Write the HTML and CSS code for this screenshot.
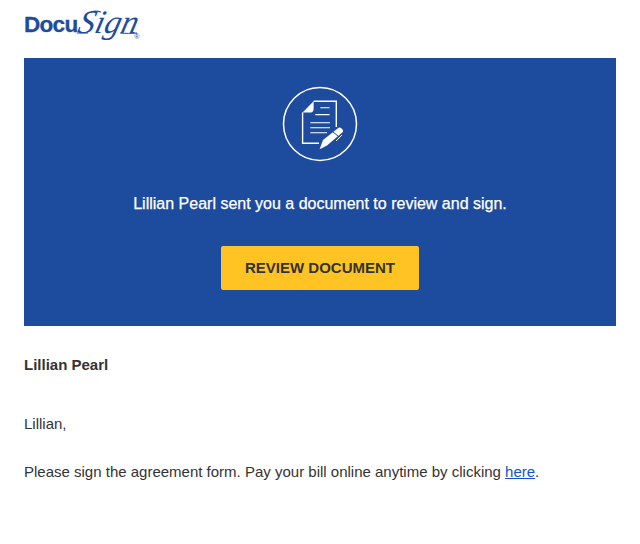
FILE: index.html
```html
<!DOCTYPE html>
<html lang="en">
<head>
<meta charset="utf-8">
<title>DocuSign</title>
<link rel="stylesheet" href="styles.css">
</head>
<body>
<div class="page">
  <header class="logo">
    <span class="logo-docu">Docu</span><span class="logo-sign">Sign</span><span class="logo-reg">®</span>
    <svg class="logo-swoosh" width="120" height="45" viewBox="0 0 120 45" aria-hidden="true">
      <path d="M53 33H64M96 33C101 33.500 108 33.500 113 33" fill="none" stroke="#1d4c9f" stroke-width="1"/>
      <path d="M64 13C68 11 73 10.500 77 12" fill="none" stroke="#1d4c9f" stroke-width="1.200"/>
    </svg>
  </header>
  <section class="banner">
    <svg class="doc-icon" width="76" height="76" viewBox="0 0 76 76" aria-hidden="true">
      <circle cx="38" cy="38" r="36.500" fill="none" stroke="#fff" stroke-width="1.500"/>
      <path d="M31.600 15.300H54.300V41M37 57.300H20.600V26.600" fill="none" stroke="#fff" stroke-width="1.400"/>
      <path d="M20.600 26.600L31.600 15.300V23C31.600 25.500 30 26.600 28 26.600Z" fill="#fff"/>
      <path d="M38.300 21.700H47.600M33.300 28.600H47.600M28.300 36.700H48M28.300 41.700H48M28.300 46.700H45" fill="none" stroke="#fff" stroke-width="1.100"/>
      <path d="M37.600 63.300L41 54L56.600 41.700C58 40.800 59.800 42 60.500 43.500C61.300 44.800 61.300 45.600 60.500 46.300L45 59.500Z" fill="#fff"/>
      <path d="M51 46L56 50" stroke="#1d4c9f" stroke-width="1"/>
      <path d="M54 55L60 49" stroke="#fff" stroke-width="1" fill="none"/>
    </svg>
    <h1 class="banner-title">Lillian Pearl sent you a document to review and sign.</h1>
    <a class="review-btn" href="#">REVIEW DOCUMENT</a>
  </section>
  <main class="message">
    <p class="sender">Lillian Pearl</p>
    <p class="greeting">Lillian,</p>
    <p class="body-text">Please sign the agreement form. Pay your bill online anytime by clicking <a href="#">here</a>.</p>
  </main>
</div>
</body>
</html>
```

FILE: styles.css
```css
html, body {
  margin: 0;
  padding: 0;
  background: #fff;
}
.page {
  padding: 0 24px;
  font-family: "Liberation Sans", Arial, sans-serif;
  color: #333;
}
.logo {
  position: relative;
  height: 58px;
  display: flex;
  align-items: flex-start;
  color: #1d4c9f;
}
.logo-docu {
  margin-top: 12px;
  font-size: 22.500px;
  line-height: 26px;
  font-weight: 700;
  letter-spacing: -0.700px;
  -webkit-text-stroke: 0.300px #1d4c9f;
}
.logo-sign {
  display: inline-block;
  margin: 6px 0 0 2px;
  font-family: "Liberation Serif", serif;
  font-style: italic;
  font-size: 33px;
  line-height: 33px;
  letter-spacing: 0.300px;
  transform: skewX(-14deg);
}
.logo-reg {
  margin: 33px 0 0 -5px;
  font-size: 7px;
  line-height: 8px;
}
.logo-swoosh {
  position: absolute;
  left: 0;
  top: 0;
}
.banner {
  height: 268px;
  box-sizing: border-box;
  padding-top: 28px;
  background: #1d4c9f;
  display: flex;
  flex-direction: column;
  align-items: center;
}
.doc-icon {
  display: block;
  margin-top: -0.300px;
}
.banner-title {
  margin: 30px 0 0;
  color: #fff;
  font-size: 16px;
  line-height: 24px;
  font-weight: 400;
  -webkit-text-stroke: 0.250px #fff;
}
.review-btn {
  margin-top: 30px;
  width: 198px;
  height: 44px;
  line-height: 44px;
  text-align: center;
  background: #ffc423;
  border-radius: 2px;
  color: #333;
  font-size: 15px;
  font-weight: 700;
  text-decoration: none;
}
.message {
  font-size: 15px;
  line-height: 20px;
}
.message p {
  margin: 0;
}
.sender {
  padding-top: 29px;
  font-weight: 700;
}
.greeting {
  padding-top: 39px;
}
.body-text {
  padding-top: 28px;
}
.body-text a {
  color: #1155cc;
}
```
